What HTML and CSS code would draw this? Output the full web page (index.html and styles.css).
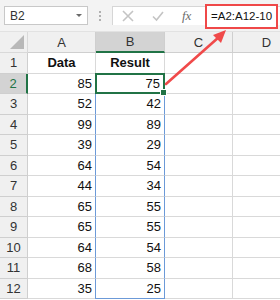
FILE: index.html
```html
<!DOCTYPE html>
<html lang="en">
<head>
  <meta charset="UTF-8" />
  <title>Spill range</title>
  <link rel="stylesheet" href="styles.css">
</head>
<body>
  <div class="sheet">
    <div class="toolbar">
      <div class="name-box">
        <span>B2</span>
        <span class="caret"></span>
      </div>
      <div class="grip"><i></i><i></i><i></i></div>
      <div class="formula-bar">
        <div class="fx-buttons">
          <svg width="12" height="12" viewBox="0 0 12 12"><path d="M1 1 L11 11 M11 1 L1 11" stroke="#c4c4c4" stroke-width="1.6" fill="none"/></svg>
          <svg width="12" height="12" viewBox="0 0 12 12"><path d="M1 6.5 L4.5 10 L11 2" stroke="#c4c4c4" stroke-width="1.6" fill="none"/></svg>
          <span class="fx">fx</span>
        </div>
        <div class="formula">=A2:A12-10</div>
      </div>
    </div>

    <div class="grid" id="grid">
      <div class="corner"></div>
      <div class="col-head">A</div>
      <div class="col-head active">B</div>
      <div class="col-head">C</div>
      <div class="col-head">D</div>
    </div>

    <svg class="pointer" width="280" height="300" viewBox="0 0 280 300">
      <line x1="166" y1="84" x2="219" y2="37" stroke="#f04a4a" stroke-width="2.6" stroke-linecap="round"/>
      <polygon points="226,30 213,35 221,43" fill="#f04a4a"/>
    </svg>
  </div>

  <script>
    const rows = [
      ["Data", "Result"],
      [85, 75], [52, 42], [99, 89], [39, 29], [64, 54],
      [44, 34], [65, 55], [65, 55], [64, 54], [68, 58], [35, 25]
    ];
    const grid = document.getElementById("grid");

    rows.forEach(function (r, i) {
      const n = i + 1;
      let html = '<div class="row-head' + (n === 2 ? ' active' : '') + '">' + n + '</div>';
      if (n === 1) {
        html += '<div class="cell head">' + r[0] + '</div>';
        html += '<div class="cell head">' + r[1] + '</div>';
      } else {
        html += '<div class="cell num">' + r[0] + '</div>';
        let cls = "cell num spill";
        if (n === 2) cls += " selected";
        if (n === rows.length) cls += " spill-end";
        html += '<div class="' + cls + '">' + r[1] + '</div>';
      }
      html += '<div class="cell"></div><div class="cell"></div>';
      grid.insertAdjacentHTML("beforeend", html);
    });
  </script>
</body>
</html>
```

FILE: styles.css
```css
body {
  margin: 0;
  background: #ffffff;
  font-family: "Liberation Sans", Arial, sans-serif;
  color: #222;
}
.sheet {
  position: relative;
  width: 280px;
  height: 300px;
  overflow: hidden;
}
.toolbar {
  height: 32px;
  background: #f3f3f3;
  display: flex;
  align-items: center;
  box-sizing: border-box;
  border-bottom: 1px solid #e2e2e2;
}
.name-box {
  margin-left: 4px;
  width: 84px;
  height: 19px;
  box-sizing: border-box;
  background: #fff;
  border: 1px solid #c8c8c8;
  display: flex;
  align-items: center;
  justify-content: space-between;
  padding: 0 5px 0 5px;
  font-size: 12px;
  color: #333;
}
.caret {
  width: 0;
  height: 0;
  border-left: 3px solid transparent;
  border-right: 3px solid transparent;
  border-top: 3px solid #6a6a6a;
}
.grip {
  width: 24px;
  display: flex;
  flex-direction: column;
  align-items: center;
  gap: 2px;
}
.grip i {
  width: 2px;
  height: 2px;
  background: #b0b0b0;
}
.formula-bar {
  flex: 1;
  height: 19px;
  display: flex;
  align-items: center;
  background: #fff;
  border-top: 1px solid #d6d6d6;
  border-left: 1px solid #d6d6d6;
  box-sizing: border-box;
}
.fx-buttons {
  width: 92px;
  display: flex;
  align-items: center;
  gap: 18px;
  padding-left: 9px;
  box-sizing: border-box;
}
.fx {
  font-family: "Liberation Serif", serif;
  font-style: italic;
  font-size: 13px;
  color: #6c6c6c;
}
.formula {
  height: 25px;
  width: 73px;
  box-sizing: border-box;
  border: 2px solid #ef4848;
  background: #fff;
  font-size: 11.5px;
  line-height: 21px;
  padding-left: 4px;
  color: #111;
  white-space: nowrap;
  overflow: hidden;
}

.grid {
  display: grid;
  grid-template-columns: 28px 68px 69px 68px 68px;
  grid-template-rows: 21px;
  grid-auto-rows: 20.5px;
}
.grid > div {
  box-sizing: border-box;
  border-right: 1px solid #d9d9d9;
  border-bottom: 1px solid #d9d9d9;
  font-size: 13px;
  display: flex;
  align-items: center;
}
.corner {
  background: #f0f0f0;
  position: relative;
}
.corner::after {
  content: "";
  position: absolute;
  right: 3px;
  bottom: 3px;
  border-left: 14px solid transparent;
  border-bottom: 14px solid #b8b8b8;
}
.grid > .col-head {
  background: #f0f0f0;
  justify-content: center;
  color: #333;
  border-right-color: #cfcfcf;
  border-bottom-color: #cfcfcf;
}
.grid > .col-head.active {
  background: #d3d3d3;
  border-bottom: 2px solid #217346;
}
.grid > .row-head {
  background: #f0f0f0;
  justify-content: center;
  color: #333;
  border-right-color: #cfcfcf;
  border-bottom-color: #cfcfcf;
}
.grid > .row-head.active {
  background: #d3d3d3;
  color: #217346;
  border-right: 2px solid #217346;
}
.cell.head {
  justify-content: center;
  font-weight: bold;
  color: #111;
}
.cell.num {
  justify-content: flex-end;
  padding-right: 3px;
  color: #111;
}
.grid > .spill {
  border-left: 1px solid #6c9ad8;
  border-right: 1px solid #6c9ad8;
  margin-left: -1px;
}
.grid > .spill-end {
  border-bottom: 1px solid #6c9ad8;
}
.grid > .selected {
  position: relative;
  border: 2px solid #217346;
  margin-top: -1px;
}
.selected::after {
  content: "";
  position: absolute;
  right: -4px;
  bottom: -4px;
  width: 5px;
  height: 5px;
  background: #217346;
  border: 1px solid #fff;
}
.pointer {
  position: absolute;
  left: 0;
  top: 0;
  pointer-events: none;
}
```
